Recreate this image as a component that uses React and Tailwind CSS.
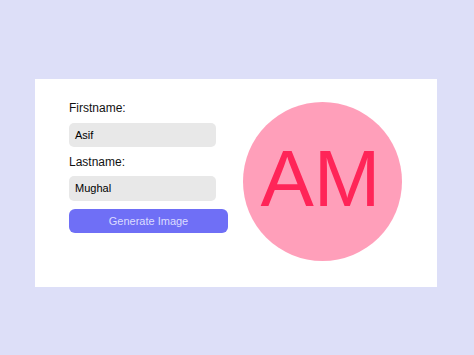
import React from "react";

const App = () => {
    return (
        <div className="min-h-screen w-full bg-[#dddff8] pt-[79px] pl-[35px] font-['Liberation_Sans',Arial,sans-serif]">
            <div className="w-[402px] h-[208px] bg-white flex items-start pl-[34px] pt-[22px]">
                {/* Form */}
                <div className="flex flex-col w-[159px]">
                    <label className="text-[12px] leading-[15px] text-[#111]">Firstname:</label>
                    <div className="mt-[7px] w-[147px] h-[24px] rounded-[5px] bg-[#e8e8e8] pl-[6px] flex items-center text-[11px] text-black">
                        Asif
                    </div>
                    <label className="mt-[8px] text-[12px] leading-[15px] text-[#111]">Lastname:</label>
                    <div className="mt-[6px] w-[147px] h-[25px] rounded-[5px] bg-[#e8e8e8] pl-[6px] flex items-center text-[11px] text-black">
                        Mughal
                    </div>
                    <button className="mt-[8px] w-[159px] h-[24px] rounded-[6px] bg-[#6f6ff6] text-[11px] text-[#dcdcff]">
                        Generate Image
                    </button>
                </div>

                {/* Avatar */}
                <div className="ml-[15px] mt-[1px] w-[159px] h-[159px] rounded-full bg-[#ff9fba] flex items-center justify-center">
                    <span className="text-[80px] leading-none text-[#ff2558] -mt-[6px] -ml-[4px]">AM</span>
                </div>
            </div>
        </div>
    );
};

export default App;
